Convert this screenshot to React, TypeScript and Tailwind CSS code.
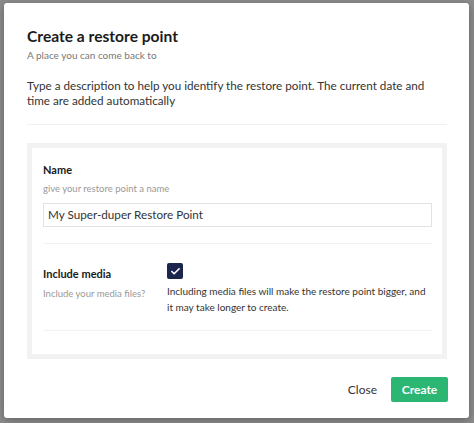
import { Check } from 'lucide-react'

export default function App() {
  return (
    <div
      className="w-[474px] h-[423px] bg-[#8c8c8c] pt-[3px] pl-[4px] overflow-hidden"
      style={{ fontFamily: 'Lato, "Open Sans", sans-serif' }}
    >
      <div className="w-[465px] h-[415px] bg-white rounded-[3px] shadow-[0_2px_8px_rgba(0,0,0,0.3)] flex flex-col">
        <div className="pl-[23px] pr-[22px] pt-[23px]">
          <h1 className="text-[15.6px] leading-[20px] font-bold text-[#1b1b1b]">Create a restore point</h1>
          <p className="mt-[2px] text-[10px] leading-[14px] text-[#777]">A place you can come back to</p>
          <p className="mt-[16px] text-[11.7px] leading-[15px] text-[#333]">
            Type a description to help you identify the restore point. The current date and time are added automatically
          </p>
          <div className="mt-[16px] h-px bg-[#f0f0f0]" />
        </div>

        <div className="ml-[23px] mr-[22px] mt-[18px] border-[5px] border-[#f2f2f2] pl-[11px] pr-[10px]">
          <div className="pt-[15px]">
            <div className="text-[11px] leading-[14px] font-bold text-[#1b1b1b]">Name</div>
            <div className="mt-[6px] text-[9.5px] leading-[12px] text-[#999]">give your restore point a name</div>
            <div className="mt-[8px] h-[24px] border border-[#e3e3e3] px-[4px] flex items-center text-[11.7px] text-[#333]">
              My Super-duper Restore Point
            </div>
          </div>
          <div className="mt-[16px] h-px bg-[#f2f2f2]" />
          <div className="flex pt-[19px]">
            <div className="w-[124px] pt-[4px]">
              <div className="text-[11px] leading-[14px] font-bold text-[#1b1b1b]">Include media</div>
              <div className="mt-[7px] text-[9.5px] leading-[12px] text-[#999]">Include your media files?</div>
            </div>
            <div className="flex-1">
              <div className="w-[16px] h-[16px] rounded-[2px] bg-[#1b264f] flex items-center justify-center">
                <Check className="w-[11px] h-[11px] text-white" strokeWidth={3.5} />
              </div>
              <p className="mt-[4px] text-[10px] leading-[16px] text-[#333]">
                Including media files will make the restore point bigger, and it may take longer to create.
              </p>
            </div>
          </div>
          <div className="mt-[15px] h-px bg-[#f2f2f2]" />
          <div className="h-[23px]" />
        </div>

        <div className="flex justify-end items-center gap-[14px] pr-[21px] mt-[18px]">
          <button className="text-[12px] text-[#333]">Close</button>
          <button className="h-[25px] w-[57px] bg-[#2bb673] rounded-[2px] text-white text-[12px] font-bold">
            Create
          </button>
        </div>
      </div>
    </div>
  )
}
